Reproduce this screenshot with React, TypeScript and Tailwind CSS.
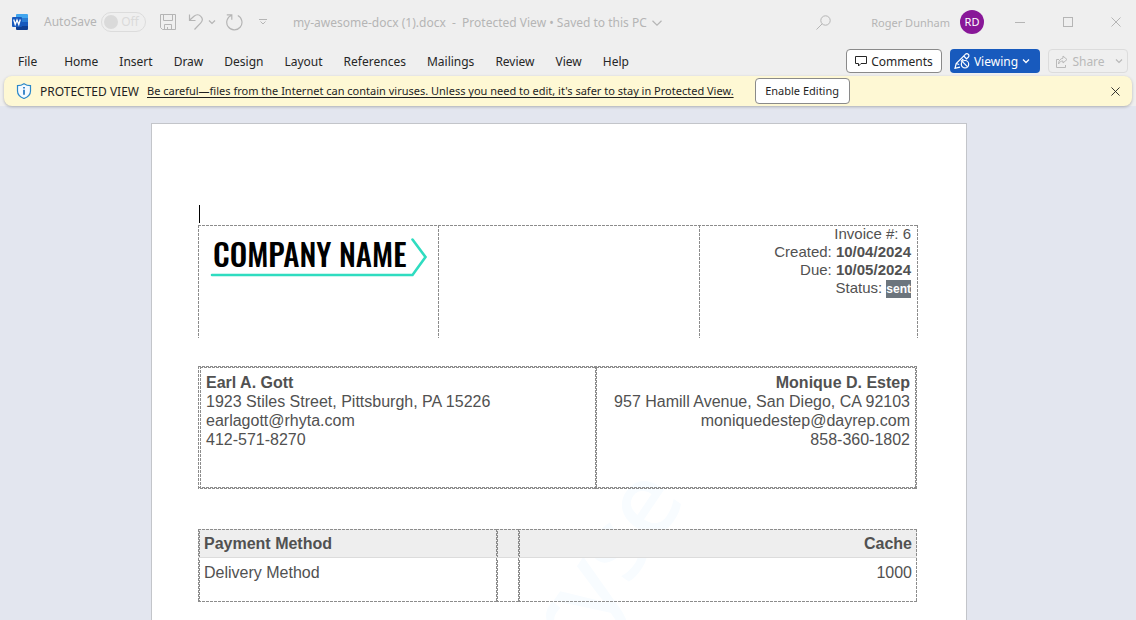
import React from "react";

const tabs = ["Home", "Insert", "Draw", "Design", "Layout", "References", "Mailings", "Review", "View", "Help"];

function WordLogo() {
  return (
    <svg width="16" height="16" viewBox="0 0 16 16" className="shrink-0" aria-hidden="true">
      <path d="M4 1a1 1 0 0 1 1-1h10a1 1 0 0 1 1 1v3H4z" fill="#41a5ee" />
      <path d="M4 4h12v4H4z" fill="#2b7cd3" />
      <path d="M4 8h12v4H4z" fill="#185abd" />
      <path d="M4 12h12v3a1 1 0 0 1-1 1H5a1 1 0 0 1-1-1z" fill="#103f91" />
      <rect x="0" y="3" width="10" height="10" rx="1" fill="#185abd" />
      <path d="M1.700 5.500l1.500 5L5 6l1.800 4.500 1.500-5" fill="none" stroke="#fff" strokeWidth="1.300" />
    </svg>
  );
}

function SaveIcon() {
  return (
    <svg width="16" height="16" viewBox="0 0 16 16" fill="none" stroke="currentColor" aria-hidden="true">
      <path d="M.5.5h15v15H2.500l-2-2z M3.500.5v6h9v-6 M4.500 15.500v-5h7v5 M7.500 15.500v-2.500" />
    </svg>
  );
}

function UndoIcon() {
  return (
    <svg width="16" height="16" viewBox="0 0 16 16" fill="none" stroke="currentColor" strokeWidth="1.200" aria-hidden="true">
      <path d="M1.500.5v6h6 M1.500 6.300L6 2.300C8 .6 11 .4 12.800 2.300c1.900 2 1.800 4.700 0 6.600L6.500 15.500" />
    </svg>
  );
}

function RedoIcon() {
  return (
    <svg width="17" height="17" viewBox="0 0 17 17" fill="none" stroke="currentColor" strokeWidth="1.200" aria-hidden="true">
      <path d="M.8.800h5v5 M5.600 1.200A7.600 7.600 0 1 0 11.800 1.500" />
    </svg>
  );
}

function Chevron({ size = 8, stroke = 1 }: { size?: number; stroke?: number }) {
  return (
    <svg width={size} height={size} viewBox="0 0 8 8" fill="none" stroke="currentColor" strokeWidth={stroke} className="shrink-0" aria-hidden="true">
      <path d="M1 2.500l3 3 3-3" />
    </svg>
  );
}

function Cross({ size }: { size: number }) {
  return (
    <svg width={size} height={size} viewBox="0 0 10 10" fill="none" stroke="currentColor" aria-hidden="true">
      <path d="M.5.5l9 9M9.500.5l-9 9" />
    </svg>
  );
}

function TitleBar() {
  return (
    <header className="flex h-11 items-center pl-3 text-[#b5b5b5]">
      <WordLogo />
      <label htmlFor="autosave" className="ml-4">AutoSave</label>
      <button id="autosave" role="switch" aria-checked="false" className="ml-1 flex h-5 w-[45px] items-center justify-between rounded-full border border-[#dcdcdc] pr-1.5 pl-0.5 text-[#dadada]">
        <span className="size-3.5 rounded-full bg-[#dadada]" />
        <span>Off</span>
      </button>
      <button aria-label="Save" className="ml-3.5"><SaveIcon /></button>
      <button aria-label="Undo" className="ml-3"><UndoIcon /></button>
      <button aria-label="Undo options" className="ml-1"><Chevron stroke={1.2} /></button>
      <button aria-label="Repeat" className="ml-2.5"><RedoIcon /></button>
      <button aria-label="Customize toolbar" className="ml-4">
        <svg width="8" height="8" viewBox="0 0 8 8" fill="none" stroke="currentColor" aria-hidden="true">
          <path d="M0 1.500h8M1.500 3.500L4 6l2.500-2.500" />
        </svg>
      </button>
      <button className="ml-[26px] flex items-center gap-1 pt-0.5 whitespace-pre">
        <span>my-awesome-docx (1).docx  -  Protected View • Saved to this PC</span>
        <Chevron size={12} stroke={0.8} />
      </button>
      <div className="flex flex-1 items-center justify-end">
        <button aria-label="Search" className="mr-10">
          <svg width="15" height="15" viewBox="0 0 15 15" fill="none" stroke="currentColor" aria-hidden="true">
            <circle cx="9.500" cy="5.500" r="4.700" />
            <path d="M6.200 8.800L.5 14.500" />
          </svg>
        </button>
        <span className="pt-0.5 text-[11px]">Roger Dunham</span>
        <span className="ml-2.5 flex size-6 items-center justify-center rounded-full bg-[#881798] text-[11px] text-white">RD</span>
        <button aria-label="Minimize" className="ml-3 flex w-12 justify-center">
          <svg width="10" height="10" viewBox="0 0 10 10" stroke="currentColor" aria-hidden="true"><path d="M0 5.500h10" /></svg>
        </button>
        <button aria-label="Maximize" className="flex w-12 justify-center">
          <svg width="10" height="10" viewBox="0 0 10 10" fill="none" stroke="currentColor" aria-hidden="true"><rect x=".5" y=".5" width="9" height="9" /></svg>
        </button>
        <button aria-label="Close" className="mr-[15px] ml-[19px]"><Cross size={10} /></button>
      </div>
    </header>
  );
}

function Ribbon() {
  return (
    <div className="flex h-8 items-center justify-between pr-2 pb-0.5 pl-[18px] text-[#262626]">
      <nav className="flex gap-[21px] pt-1.5">
        <a href="#file" className="mr-1.5">File</a>
        {tabs.map((t) => (
          <a key={t} href={"#" + t.toLowerCase()}>{t}</a>
        ))}
      </nav>
      <div className="flex gap-2 pt-1">
        <button className="flex h-6 w-24 items-center justify-center gap-1 rounded border border-[#8a8a8a] bg-white">
          <svg width="12" height="12" viewBox="0 0 12 12" fill="none" stroke="currentColor" aria-hidden="true">
            <path d="M.5 1.500h11v7H6L3.500 11V8.500h-3z" />
          </svg>
          <span className="pt-px">Comments</span>
        </button>
        <button className="flex h-6 w-[90px] items-center justify-between rounded bg-[#185abd] pr-2.5 pl-1 text-white">
          <svg width="16" height="16" viewBox="0 0 16 16" fill="none" stroke="currentColor" strokeWidth="1.200" aria-hidden="true">
            <path d="M6 14.200L1 15.300 2.200 10.500 11.300 1.300a2 2 0 0 1 3 0 2 2 0 0 1 0 2.900L12.500 6 M9.700 3l3 3 M2.200 10.500l3 1 M7 8.500L9.300 6" />
            <circle cx="11" cy="11.200" r="3.700" />
            <path d="M8.400 8.600l5.200 5.200" />
          </svg>
          <span className="pt-px">Viewing</span>
          <Chevron stroke={1.3} />
        </button>
        <button disabled className="flex h-6 w-20 items-center justify-between rounded border border-[#dcdcdc] pr-1 pl-1.5 text-[#b9b9b9]">
          <svg width="13" height="13" viewBox="0 0 13 13" fill="none" stroke="currentColor" aria-hidden="true">
            <path d="M4 4.500H1.500v8h9V10 M8 1l4 3.500L8 8V6C6 6 4.500 7 3.500 9 3.700 5.500 5.500 3.500 8 3.200z" />
          </svg>
          <span className="pt-px pr-1.5">Share</span>
          <Chevron stroke={1.2} />
        </button>
      </div>
    </div>
  );
}

function ProtectedBar() {
  return (
    <div className="mx-1 flex h-[30px] items-center rounded-lg bg-[#fef8d4] pr-3 pl-3 text-[#1f1f1f] shadow-[0_1px_3px_rgba(0,0,0,0.25)]">
      <svg width="16" height="16" viewBox="0 0 16 16" fill="none" aria-hidden="true">
        <path d="M8 .7c2 1.400 4.200 2 6.500 2V8c0 3.500-2.500 6-6.500 7.500C4 14 1.500 11.500 1.500 8V2.700C3.800 2.700 6 2.100 8 .7z" fill="#f4faff" stroke="#2b88c9" strokeWidth="1.200" />
        <path d="M8 6.800v5M8 3.900v1.600" stroke="#0f6cbd" strokeWidth="1.600" />
      </svg>
      <span className="ml-2 pt-px">PROTECTED VIEW</span>
      <a href="#protected" className="ml-2 pt-px text-[11px] underline underline-offset-2">
        Be careful—files from the Internet can contain viruses. Unless you need to edit, it's safer to stay in Protected View.
      </a>
      <button className="mr-auto ml-[21px] h-[26px] w-[95px] rounded border border-[#8a8a8a] bg-white text-[11px]">Enable Editing</button>
      <button aria-label="Dismiss"><Cross size={9} /></button>
    </div>
  );
}

function CompanyLogo() {
  return (
    <svg width="218" height="42" viewBox="0 0 218 42" className="overflow-visible" role="img" aria-label="Company name">
      <text x="3" y="30" fontSize="31" fontWeight="500" fontFamily="Oswald, sans-serif" fill="#000">COMPANY NAME</text>
      <path d="M2 38h200.500l13-18-13-17.500" fill="none" stroke="#2fdcc0" strokeWidth="2.600" strokeLinecap="round" />
    </svg>
  );
}

function Page() {
  return (
    <main className="relative mx-auto min-h-[600px] w-full max-w-[816px] overflow-hidden border border-[#c3c5ca] bg-white px-[46px] font-['Liberation_Sans',Arial,sans-serif] text-base leading-[19px] text-[#515151] [--h:repeating-linear-gradient(90deg,#8c8c8c_0_3px,transparent_3px_4px)] [--v:repeating-linear-gradient(180deg,#8c8c8c_0_3px,transparent_3px_4px)]">
      <div aria-hidden="true" className="absolute top-[448px] left-[432px] origin-bottom-left -rotate-[56deg] font-['Noto_Sans',sans-serif] text-[100px] leading-none font-medium text-[#f8fcff]">
        ryse
      </div>
      <div className="relative pt-[81px]">
        <div className="ml-px h-[18px] w-px bg-black" />
        <table className="mt-0.5 h-[113px] w-[720px] max-w-full table-fixed border-collapse text-[15px] leading-[18px] [background:var(--h)_0_0/100%_1px_no-repeat]">
          <tbody>
            <tr className="align-top">
              <td className="w-1/3 pt-3 pl-3 [background:var(--v)_0_0/1px_100%_no-repeat]"><CompanyLogo /></td>
              <td className="[background:var(--v)_0_0/1px_100%_no-repeat]" />
              <td className="w-[219px] pr-[7px] text-right [background:var(--v)_0_0/1px_100%_no-repeat,var(--v)_100%_0/1px_100%_no-repeat]">
                <div>Invoice #: 6</div>
                <div>Created: <b>10/04/2024</b></div>
                <div>Due: <b>10/05/2024</b></div>
                <div>Status: <b className="bg-[#6c757d] py-0.5 text-xs text-white">sent</b></div>
              </td>
            </tr>
          </tbody>
        </table>
        <table className="mt-7 h-[123px] w-[719px] max-w-full border-collapse [background:var(--h)_0_0/100%_1px_no-repeat,var(--h)_2px_1px/100%_1px_no-repeat,var(--h)_2px_100%/100%_1px_no-repeat,var(--h)_0_calc(100%-1px)/100%_1px_no-repeat,var(--v)_0_0/1px_100%_no-repeat,var(--v)_2px_0/1px_100%_no-repeat]">
          <tbody>
            <tr className="align-top">
              <td className="pt-[7px] pl-2">
                <div className="font-bold">Earl A. Gott</div>
                <div>1923 Stiles Street, Pittsburgh, PA 15226</div>
                <div>earlagott@rhyta.com</div>
                <div>412-571-8270</div>
              </td>
              <td className="w-[322px] pt-[7px] pr-[7px] text-right [background:var(--v)_0_0/1px_100%_no-repeat,var(--v)_1px_2px/1px_100%_no-repeat,var(--v)_100%_0/1px_100%_no-repeat,var(--v)_calc(100%-1px)_2px/1px_100%_no-repeat]">
                <div className="font-bold">Monique D. Estep</div>
                <div>957 Hamill Avenue, San Diego, CA 92103</div>
                <div>moniquedestep@dayrep.com</div>
                <div>858-360-1802</div>
              </td>
            </tr>
          </tbody>
        </table>
        <table className="mt-10 w-[719px] max-w-full border-collapse">
          <thead>
            <tr className="h-7 border-b border-[#dcdcdc]">
              <th className="pt-0.5 pl-1.5 text-left [background:var(--h)_0_0/100%_1px_no-repeat,var(--v)_0_0/1px_100%_no-repeat,var(--v)_1px_2px/1px_100%_no-repeat,#eeeeee]">Payment Method</th>
              <th aria-label="Spacer" className="w-[22px] [background:var(--h)_0_0/100%_1px_no-repeat,var(--v)_0_0/1px_100%_no-repeat,var(--v)_1px_2px/1px_100%_no-repeat,#eeeeee]" />
              <th className="w-[399px] pt-0.5 pr-[5px] text-right [background:var(--h)_0_0/100%_1px_no-repeat,var(--v)_0_0/1px_100%_no-repeat,var(--v)_1px_2px/1px_100%_no-repeat,var(--v)_100%_0/1px_100%_no-repeat,#eeeeee]">Cache</th>
            </tr>
          </thead>
          <tbody>
            <tr className="h-[45px] align-top">
              <td className="pt-[5px] pl-1.5 [background:var(--h)_0_100%/100%_1px_no-repeat,var(--v)_0_0/1px_100%_no-repeat,var(--v)_1px_2px/1px_100%_no-repeat]">Delivery Method</td>
              <td className="[background:var(--h)_0_100%/100%_1px_no-repeat,var(--v)_0_0/1px_100%_no-repeat,var(--v)_1px_2px/1px_100%_no-repeat]" />
              <td className="pt-[5px] pr-[5px] text-right [background:var(--h)_0_100%/100%_1px_no-repeat,var(--v)_0_0/1px_100%_no-repeat,var(--v)_1px_2px/1px_100%_no-repeat,var(--v)_100%_0/1px_100%_no-repeat]">1000</td>
            </tr>
          </tbody>
        </table>
      </div>
    </main>
  );
}

export default function App() {
  return (
    <div className="flex h-screen flex-col overflow-hidden bg-[#e3e6ef] font-['Noto_Sans',sans-serif] text-xs">
      <div className="relative bg-[#efefef]">
        <TitleBar />
        <Ribbon />
        <ProtectedBar />
      </div>
      <div className="flex-1 overflow-hidden pt-[17px] pr-[18px]">
        <Page />
      </div>
    </div>
  );
}
